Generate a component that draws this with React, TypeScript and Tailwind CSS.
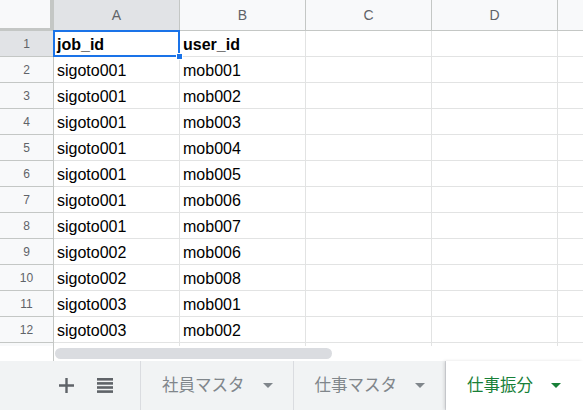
import React from "react";

const ROWS: [string, string][] = [
  ["job_id", "user_id"],
  ["sigoto001", "mob001"],
  ["sigoto001", "mob002"],
  ["sigoto001", "mob003"],
  ["sigoto001", "mob004"],
  ["sigoto001", "mob005"],
  ["sigoto001", "mob006"],
  ["sigoto001", "mob007"],
  ["sigoto002", "mob006"],
  ["sigoto002", "mob008"],
  ["sigoto003", "mob001"],
  ["sigoto003", "mob002"],
  ["", ""],
];

const COLS = ["A", "B", "C", "D", ""];

function Caret({ color }: { color: string }) {
  return (
    <svg width="10" height="5" viewBox="0 0 10 5" className="shrink-0">
      <path d="M0 0h10L5 5z" fill={color} />
    </svg>
  );
}

function Tab({ label, active }: { label: string; active?: boolean }) {
  return (
    <div
      className={`flex h-full shrink-0 items-center gap-[18px] whitespace-nowrap pl-[21px] pr-[20px] ${
        active
          ? "flex-1 bg-white text-[#188038] shadow-[-2px_0_3px_rgba(0,0,0,0.12)]"
          : "border-r border-[#dadce0] text-[#80868b]"
      }`}
    >
      <span className="text-[16.5px] leading-none">{label}</span>
      <Caret color={active ? "#188038" : "#80868b"} />
    </div>
  );
}

export default function App() {
  return (
    <div
      className="flex h-[410px] w-[583px] flex-col overflow-hidden bg-white"
      style={{ fontFamily: '"Liberation Sans", Arial, "Noto Sans CJK JP", sans-serif' }}
    >
      {/* Grid */}
      <div className="h-[346px] shrink-0 overflow-hidden">
        {/* Column header */}
        <div className="flex h-[31px]">
          <div className="w-[54px] shrink-0 border-b-[3px] border-r-[4px] border-[#c4c7c5] bg-[#f8f9fa]" />
          {COLS.map((c, i) => (
            <div
              key={i}
              className={`flex w-[126px] shrink-0 items-center justify-center border-b border-r border-[#c4c7c5] text-[14px] text-[#5f6368] ${
                i === 0 ? "bg-[#e1e3e6]" : "bg-[#f8f9fa]"
              }`}
            >
              {c}
            </div>
          ))}
        </div>

        {ROWS.map(([a, b], r) => (
          <div key={r} className="flex h-[26px]">
            <div
              className={`flex w-[54px] shrink-0 items-center justify-center border-b border-r border-[#c4c7c5] text-[12px] text-[#5f6368] ${
                r === 0 ? "bg-[#e1e3e6]" : "bg-[#f8f9fa]"
              }`}
            >
              {r < 12 ? r + 1 : ""}
            </div>
            {[a, b, "", "", ""].map((v, i) => (
              <div
                key={i}
                className={`relative flex w-[126px] shrink-0 items-end overflow-visible border-b border-r border-[#e2e3e3] pb-[3px] pl-[3px] text-[16px] leading-none text-black ${
                  r === 0 ? "font-bold" : ""
                }`}
              >
                {v}
                {r === 0 && i === 0 && (
                  <>
                    <div className="pointer-events-none absolute -left-px -top-px bottom-[-1px] right-[-1px] border-2 border-[#1a73e8]" />
                    <div className="absolute -bottom-[4px] -right-[4px] z-10 h-[7px] w-[7px] border border-white bg-[#1a73e8]" />
                  </>
                )}
              </div>
            ))}
          </div>
        ))}
      </div>

      {/* Horizontal scroll strip */}
      <div className="flex h-[15px] shrink-0">
        <div className="w-[54px] shrink-0 border-r border-[#c4c7c5] bg-white" />
        <div className="flex flex-1 items-center pl-[1px]">
          <div className="h-[11px] w-[277px] rounded-full bg-[#dadce0]" />
        </div>
      </div>

      {/* Sheet tabs */}
      <div className="flex flex-1 items-stretch bg-[#f1f3f4]">
        <div className="flex w-[141px] shrink-0 items-center border-r border-[#dadce0] pl-[59px]">
          <svg width="15" height="15" viewBox="0 0 15 15">
            <path d="M6.3 0h2.4v6.3H15v2.4H8.7V15H6.3V8.7H0V6.3h6.3z" fill="#5f6368" />
          </svg>
          <svg width="16" height="15" viewBox="0 0 16 15" className="ml-[23px]">
            <rect x="0" y="0" width="16" height="2.6" fill="#5f6368" />
            <rect x="0" y="4.1" width="16" height="2.6" fill="#5f6368" />
            <rect x="0" y="8.2" width="16" height="2.6" fill="#5f6368" />
            <rect x="0" y="12.3" width="16" height="2.6" fill="#5f6368" />
          </svg>
        </div>
        <Tab label="社員マスタ" />
        <Tab label="仕事マスタ" />
        <Tab label="仕事振分" active />
      </div>
    </div>
  );
}
